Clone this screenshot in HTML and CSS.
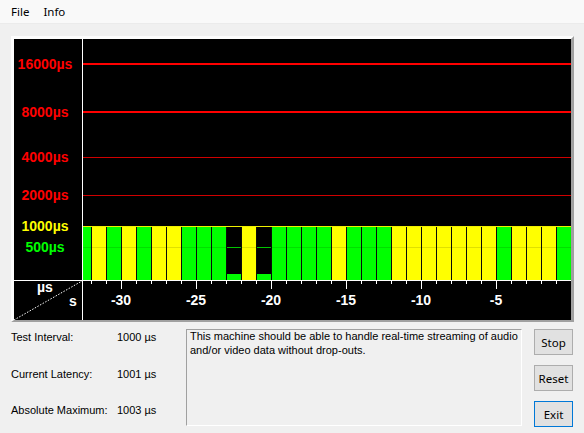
FILE: index.html
```html
<!DOCTYPE html>
<html>
<head>
<meta charset="utf-8">
<link rel="stylesheet" href="styles.css">
</head>
<body>
<div class="menubar"><span class="menu-item">File</span><span class="menu-item">Info</span></div>
<div class="chart-frame">
<svg class="chart" width="557" height="281" viewBox="0 0 557 281" shape-rendering="crispEdges">
  <rect class="bg" x="0" y="0" width="557" height="281"/>
  <!-- grid lines -->
  <rect class="grid-hi" x="69" y="24" width="488" height="2"/>
  <rect class="grid-hi" x="69" y="72" width="488" height="2"/>
  <rect class="grid-lo" x="69" y="118" width="488" height="1"/>
  <rect class="grid-lo" x="69" y="156" width="488" height="1"/>
  <rect class="grid-green" x="69" y="208" width="488" height="1"/>
  <!-- bars -->
  <rect class="bar-g" x="69" y="187" width="8" height="54"/>
  <rect class="bar-y" x="77" y="187" width="15" height="54"/>
  <rect class="bar-g" x="92" y="187" width="15" height="54"/>
  <rect class="bar-y" x="107" y="187" width="15" height="54"/>
  <rect class="bar-g" x="122" y="187" width="15" height="54"/>
  <rect class="bar-y" x="137" y="187" width="15" height="54"/>
  <rect class="bar-y" x="152" y="187" width="15" height="54"/>
  <rect class="bar-g" x="167" y="187" width="15" height="54"/>
  <rect class="bar-g" x="182" y="187" width="15" height="54"/>
  <rect class="bar-g" x="197" y="187" width="15" height="54"/>
  <rect class="bar-g" x="213" y="235" width="14" height="6"/>
  <rect class="bar-y" x="227" y="187" width="15" height="54"/>
  <rect class="bar-g" x="243" y="235" width="14" height="6"/>
  <rect class="bar-g" x="257" y="187" width="15" height="54"/>
  <rect class="bar-g" x="272" y="187" width="15" height="54"/>
  <rect class="bar-g" x="287" y="187" width="15" height="54"/>
  <rect class="bar-g" x="302" y="187" width="15" height="54"/>
  <rect class="bar-y" x="317" y="187" width="15" height="54"/>
  <rect class="bar-g" x="332" y="187" width="15" height="54"/>
  <rect class="bar-g" x="347" y="187" width="15" height="54"/>
  <rect class="bar-g" x="362" y="187" width="15" height="54"/>
  <rect class="bar-y" x="377" y="187" width="15" height="54"/>
  <rect class="bar-y" x="392" y="187" width="15" height="54"/>
  <rect class="bar-y" x="407" y="187" width="15" height="54"/>
  <rect class="bar-y" x="422" y="187" width="15" height="54"/>
  <rect class="bar-y" x="437" y="187" width="15" height="54"/>
  <rect class="bar-y" x="452" y="187" width="15" height="54"/>
  <rect class="bar-y" x="467" y="187" width="15" height="54"/>
  <rect class="bar-g" x="482" y="187" width="15" height="54"/>
  <rect class="bar-y" x="497" y="187" width="15" height="54"/>
  <rect class="bar-y" x="512" y="187" width="15" height="54"/>
  <rect class="bar-y" x="527" y="187" width="15" height="54"/>
  <rect class="bar-g" x="542" y="187" width="15" height="54"/>
  <!-- separators -->
  <g class="sep">
    <rect x="77" y="187" width="1" height="54"/><rect x="92" y="187" width="1" height="54"/>
    <rect x="107" y="187" width="1" height="54"/><rect x="122" y="187" width="1" height="54"/>
    <rect x="137" y="187" width="1" height="54"/><rect x="152" y="187" width="1" height="54"/>
    <rect x="167" y="187" width="1" height="54"/><rect x="182" y="187" width="1" height="54"/>
    <rect x="197" y="187" width="1" height="54"/><rect x="212" y="187" width="1" height="54"/>
    <rect x="227" y="187" width="1" height="54"/><rect x="242" y="187" width="1" height="54"/>
    <rect x="257" y="187" width="1" height="54"/><rect x="272" y="187" width="1" height="54"/>
    <rect x="287" y="187" width="1" height="54"/><rect x="302" y="187" width="1" height="54"/>
    <rect x="317" y="187" width="1" height="54"/><rect x="332" y="187" width="1" height="54"/>
    <rect x="347" y="187" width="1" height="54"/><rect x="362" y="187" width="1" height="54"/>
    <rect x="377" y="187" width="1" height="54"/><rect x="392" y="187" width="1" height="54"/>
    <rect x="407" y="187" width="1" height="54"/><rect x="422" y="187" width="1" height="54"/>
    <rect x="437" y="187" width="1" height="54"/><rect x="452" y="187" width="1" height="54"/>
    <rect x="467" y="187" width="1" height="54"/><rect x="482" y="187" width="1" height="54"/>
    <rect x="497" y="187" width="1" height="54"/><rect x="512" y="187" width="1" height="54"/>
    <rect x="527" y="187" width="1" height="54"/><rect x="542" y="187" width="1" height="54"/>
  </g>
  <rect class="grid-yellow" x="69" y="187" width="488" height="1"/>
  <rect class="grid-shade" x="69" y="208" width="488" height="1"/>
  <!-- axes -->
  <rect class="axis" x="68" y="0" width="1" height="281"/>
  <rect class="axis" x="0" y="241" width="557" height="1"/>
  <line class="diag" x1="0" y1="281" x2="68" y2="242" shape-rendering="auto"/>
  <!-- ticks -->
  <g class="axis">
    <rect x="77" y="242" width="1" height="3"/><rect x="92" y="242" width="1" height="3"/>
    <rect x="107" y="242" width="1" height="8"/><rect x="122" y="242" width="1" height="3"/>
    <rect x="137" y="242" width="1" height="3"/><rect x="152" y="242" width="1" height="3"/>
    <rect x="167" y="242" width="1" height="3"/><rect x="182" y="242" width="1" height="8"/>
    <rect x="197" y="242" width="1" height="3"/><rect x="212" y="242" width="1" height="3"/>
    <rect x="227" y="242" width="1" height="3"/><rect x="242" y="242" width="1" height="3"/>
    <rect x="257" y="242" width="1" height="8"/><rect x="272" y="242" width="1" height="3"/>
    <rect x="287" y="242" width="1" height="3"/><rect x="302" y="242" width="1" height="3"/>
    <rect x="317" y="242" width="1" height="3"/><rect x="332" y="242" width="1" height="8"/>
    <rect x="347" y="242" width="1" height="3"/><rect x="362" y="242" width="1" height="3"/>
    <rect x="377" y="242" width="1" height="3"/><rect x="392" y="242" width="1" height="3"/>
    <rect x="407" y="242" width="1" height="8"/><rect x="422" y="242" width="1" height="3"/>
    <rect x="437" y="242" width="1" height="3"/><rect x="452" y="242" width="1" height="3"/>
    <rect x="467" y="242" width="1" height="3"/><rect x="482" y="242" width="1" height="8"/>
    <rect x="497" y="242" width="1" height="3"/><rect x="512" y="242" width="1" height="3"/>
    <rect x="527" y="242" width="1" height="3"/><rect x="542" y="242" width="1" height="3"/>
  </g>
  <!-- y labels -->
  <text class="ylabel red" x="31" y="30">16000µs</text>
  <text class="ylabel red" x="31" y="78">8000µs</text>
  <text class="ylabel red" x="31" y="123">4000µs</text>
  <text class="ylabel red" x="31" y="161">2000µs</text>
  <text class="ylabel yellow" x="31" y="192">1000µs</text>
  <text class="ylabel green" x="31" y="213">500µs</text>
  <text class="unit" x="23" y="253">µs</text>
  <text class="unit" x="55" y="267">s</text>
  <!-- x labels -->
  <text class="xlabel" x="107" y="266">-30</text>
  <text class="xlabel" x="182" y="266">-25</text>
  <text class="xlabel" x="257" y="266">-20</text>
  <text class="xlabel" x="332" y="266">-15</text>
  <text class="xlabel" x="407" y="266">-10</text>
  <text class="xlabel" x="482" y="266">-5</text>
</svg>
</div>
<div class="bottom">
  <div class="stats">
    <div class="stat"><span class="stat-label">Test Interval:</span><span class="stat-value">1000 µs</span></div>
    <div class="stat"><span class="stat-label">Current Latency:</span><span class="stat-value">1001 µs</span></div>
    <div class="stat"><span class="stat-label">Absolute Maximum:</span><span class="stat-value">1003 µs</span></div>
  </div>
  <div class="message">This machine should be able to handle real-time streaming of audio<br>and/or video data without drop-outs.</div>
  <div class="buttons">
    <button class="btn">Stop</button>
    <button class="btn">Reset</button>
    <button class="btn btn-default">Exit</button>
  </div>
</div>
</body>
</html>
```
FILE: styles.css
```css
html, body {
  margin: 0;
  padding: 0;
  background: #f0f0f0;
  width: 584px;
  height: 433px;
  overflow: hidden;
  font-family: "Noto Sans", "Liberation Sans", sans-serif;
  color: #000;
}

.menubar {
  height: 23px;
  background: #f9f9f9;
  border-bottom: 1px solid #ebebeb;
  display: flex;
  align-items: center;
  padding-left: 4px;
  font-size: 11.5px;
}

.menu-item {
  padding: 0 7px;
  line-height: 23px;
}

.chart-frame {
  margin: 12px 0 0 11px;
  width: 557px;
  height: 281px;
  border-style: solid;
  border-width: 3px 3px 2px 3px;
  border-color: #fdfdfd #a0a0a0 #a0a0a0 #fdfdfd;
}

.chart {
  display: block;
}

.bg { fill: #000; }
.grid-hi { fill: #ff0000; }
.grid-lo { fill: #d00000; }
.grid-green { fill: #00e000; }
.grid-yellow { fill: #f0f000; }
.grid-shade { fill: #000; opacity: 0.12; }
.bar-g { fill: #00ff00; }
.bar-y { fill: #ffff00; }
.sep rect { fill: #0a0a0a; }
.axis, .axis rect { fill: #fff; }
.diag { stroke: #fff; stroke-width: 1; stroke-dasharray: 1.5 1.5; }

.ylabel {
  font-family: "Liberation Sans", Arial, sans-serif;
  font-weight: bold;
  font-size: 14px;
  text-anchor: middle;
}
.red { fill: #ff0000; }
.yellow { fill: #ffff00; }
.green { fill: #00ff00; }

.unit, .xlabel {
  font-family: "Liberation Sans", Arial, sans-serif;
  font-weight: bold;
  font-size: 14px;
  fill: #fff;
}
.xlabel { text-anchor: middle; }

.bottom {
  display: grid;
  grid-template-columns: 163px 336px 39px;
  column-gap: 12px;
  padding: 7px 0 0 11px;
  font-size: 11px;
  font-family: "Liberation Sans", "Noto Sans", sans-serif;
}

.stats {
  display: flex;
  flex-direction: column;
  gap: 23.5px;
  padding-top: 2px;
}

.stat {
  display: flex;
  line-height: 13px;
  white-space: nowrap;
}

.stat-label {
  width: 106px;
  flex: none;
}

.message {
  box-sizing: border-box;
  height: 97px;
  border: 1px solid;
  border-color: #a0a0a0 #fff #fff #a0a0a0;
  padding: 0 3px;
  line-height: 13.5px;
  white-space: nowrap;
  overflow: hidden;
}

.buttons {
  display: flex;
  flex-direction: column;
  gap: 10px;
}

.btn {
  box-sizing: border-box;
  width: 39px;
  height: 26px;
  margin: 0;
  padding: 0;
  background: #e1e1e1;
  border: 1px solid #adadad;
  font-family: "Noto Sans", "Liberation Sans", sans-serif;
  font-size: 11.5px;
  color: #000;
}

.btn-default {
  border-color: #0078d7;
}
```
